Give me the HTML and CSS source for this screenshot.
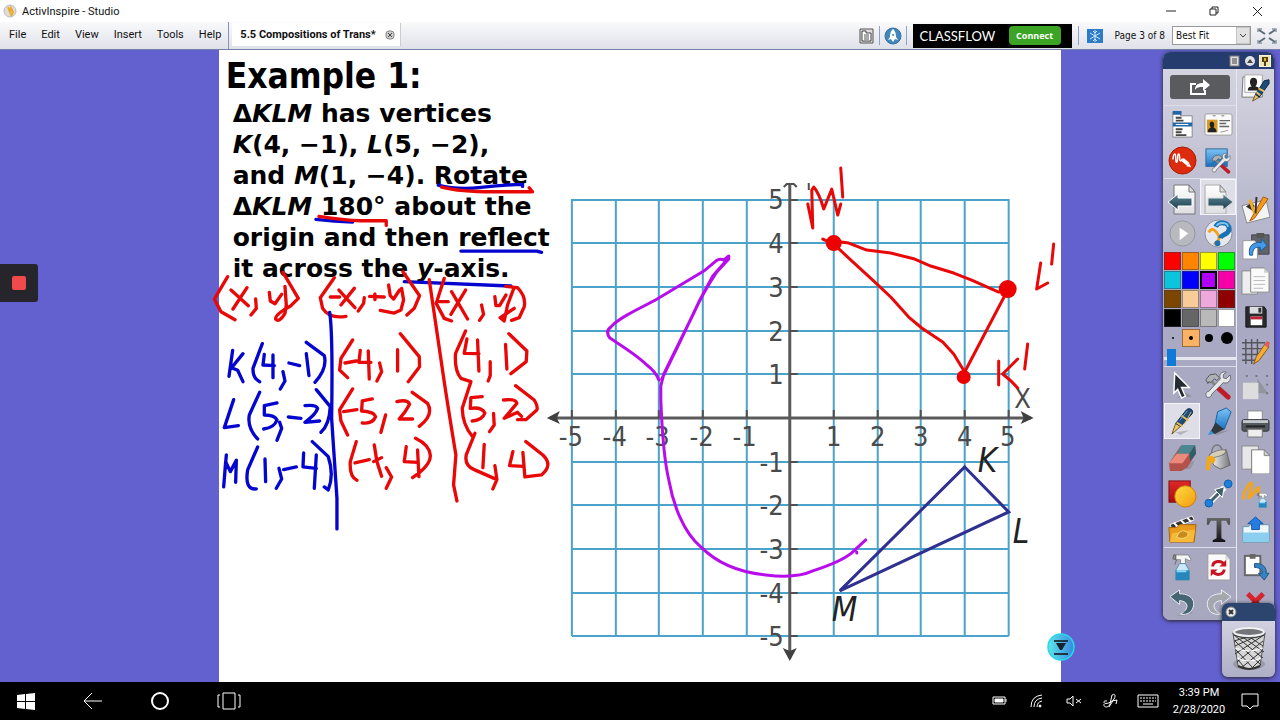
FILE: index.html
```html
<!DOCTYPE html>
<html lang="en">
<head>
<meta charset="utf-8">
<title>ActivInspire - Studio</title>
<link rel="stylesheet" href="styles.css">
</head>
<body>
<svg class="sprite" aria-hidden="true">
  <defs>
    <linearGradient id="gBlue" x1="0" y1="0" x2="0" y2="1"><stop offset="0" stop-color="#7cc4f4"/><stop offset="1" stop-color="#1f74c4"/></linearGradient>
    <linearGradient id="gPaper" x1="0" y1="0" x2="0" y2="1"><stop offset="0" stop-color="#fff"/><stop offset="1" stop-color="#dedee2"/></linearGradient>
    <linearGradient id="gSteel" x1="0" y1="0" x2="1" y2="0"><stop offset="0" stop-color="#fff"/><stop offset="1" stop-color="#74777c"/></linearGradient>
    <linearGradient id="gGold" x1="0" y1="0" x2="1" y2="1"><stop offset="0" stop-color="#ffdc40"/><stop offset="1" stop-color="#f59a10"/></linearGradient>
    <linearGradient id="gRed" x1="0" y1="0" x2="0" y2="1"><stop offset="0" stop-color="#e02828"/><stop offset="1" stop-color="#a80d14"/></linearGradient>
    <linearGradient id="gArrow" x1="0" y1="0" x2="0" y2="1"><stop offset="0" stop-color="#5a8797"/><stop offset="1" stop-color="#1c3a48"/></linearGradient>
    <linearGradient id="gDark" x1="0" y1="0" x2="0" y2="1"><stop offset="0" stop-color="#666"/><stop offset="1" stop-color="#111"/></linearGradient>
  </defs>
  <symbol id="tools" viewBox="0 0 30 30">
    <path d="M6 9L23 26" stroke="#888" stroke-width="3"/>
    <path d="M15 18L25 27" stroke="#c01c28" stroke-width="5" stroke-linecap="round"/>
    <path d="M2 9l4-5 6-1 4 4-3 3-2-2-4 4-2-1-1 2z" fill="#aeb2b6" stroke="#555"/>
    <path d="M27 4l-4 4-3-1 0-3 3-3c-5-1-8 3-6 7L5 21c-3 0-4 4-2 6 2 1 5 0 5-3L20 12c4 2 9-2 7-8z" fill="#e6e8ea" stroke="#66696d"/>
  </symbol>
  <symbol id="pen" viewBox="0 0 30 30">
    <path d="M8 26l14-2-9 5z" fill="#777" opacity=".4"/>
    <path d="M4 28l4-11 5 3z" fill="#e9c572" stroke="#755821"/>
    <path d="M8 17L19 3c3-3 8 0 6 4L13 20z" fill="#1d4c7a" stroke="#0d2540"/>
    <path d="M14 9l7 5M9 16l6 4" stroke="#e6bd58" stroke-width="2"/><path d="M24 5l-7 13" stroke="#e6bd58"/>
    <path d="M12 14l8-10" stroke="#79a9d2"/>
  </symbol>
  <symbol id="annotate" viewBox="0 0 30 30">
    <path d="M2 4h20v21H1z" fill="#f6f6f6" stroke="#777"/><rect x="4" y="2" width="18" height="18" fill="#fff" stroke="#aaa"/>
    <path d="M7 18c0-3 2-4 4-4-3-4-2-9 2-9s5 5 2 9c2 0 4 1 4 4z" fill="#222"/>
    <path d="M12 29l3-7 4 3z" fill="#e9c572" stroke="#755821"/><path d="M15 22l9-14 5-1 0 4-10 14z" fill="#1d4c7a" stroke="#0d2540"/><path d="M18 16l6 3M16 20l4 3" stroke="#e6bd58" stroke-width="2"/>
  </symbol>
  <symbol id="menulist" viewBox="0 0 30 30">
    <path d="M5 2h8v4h12v22H5z" fill="#fff" stroke="#888"/><path d="M5 1h9v4H5zM5 13h20v4H5z" fill="#2467a8"/>
    <path d="M8 8h6M8 11h8M8 20h7M8 23h6M8 26h11" stroke="#444" stroke-width="2"/><path d="M8 15h13" stroke="#fff"/>
  </symbol>
  <symbol id="idcard" viewBox="0 0 30 30">
    <rect x="1" y="4" width="28" height="22" rx="2" fill="#fafafa" stroke="#999"/><path d="M9 6h3M18 6h3" stroke="#777"/>
    <rect x="3" y="10" width="11" height="13" fill="#d79a25"/><path d="M4 23c0-4 2-4 3-5-2-3-1-6 1-6 3 0 3 4 2 6 2 1 3 2 3 5z" fill="#222"/>
    <path d="M16 11h11M16 14h7M16 17h10" stroke="#666" stroke-width="1.5"/><path d="M17 23l8-2" stroke="#999"/>
  </symbol>
  <symbol id="record" viewBox="0 0 30 30">
    <circle cx="15" cy="15" r="14" fill="#dd2c0d" stroke="#a51c06"/><path d="M5 14c1-8 3-7 3-1s2 4 2-1 2-5 2 0 1 4 3 1" fill="none" stroke="#fff" stroke-width="1.5"/><path d="M15 14l6 5" stroke="#fff" stroke-width="4"/><path d="M22 18l2 4-5-1z" fill="#fff"/>
  </symbol>
  <symbol id="desktop" viewBox="0 0 30 30">
    <rect x="2" y="3" width="22" height="18" fill="url(#gBlue)" stroke="#2c6398"/><path d="M3 19c7-2 14-6 20-11v12H3z" fill="#1a67af" opacity=".5"/><use href="#tools" x="7" y="7" width="22" height="22"/>
  </symbol>
  <symbol id="pageprev" viewBox="0 0 36 36">
    <path d="M10 6h15l6 7v22H10z" fill="url(#gPaper)" stroke="#777"/><path d="M25 6v7h6z" fill="#ddd" stroke="#777"/>
    <path d="M4 23l10-8v4h14v8H14v4z" fill="url(#gArrow)" stroke="#fff"/>
  </symbol>
  <symbol id="pagenext" viewBox="0 0 36 36">
    <path d="M5 6h15l6 7v22H5z" fill="url(#gPaper)" stroke="#aaa"/><path d="M20 6v7h6z" fill="#ddd" stroke="#888"/>
    <path d="M33 23l-10-8v4H8v8h15v4z" fill="url(#gArrow)" stroke="#ddd"/>
  </symbol>
  <symbol id="play" viewBox="0 0 30 30"><circle cx="15" cy="15" r="13" fill="#b8b9be" stroke="#94969b"/><path d="M12 9l9 6-9 7z" fill="#fff"/></symbol>
  <symbol id="help" viewBox="0 0 30 30">
    <circle cx="15" cy="15" r="14" fill="#e5e8ee" stroke="#8a8f98"/><path d="M5 14c3-7 8-1 10 3s-2 9-5 8" fill="none" stroke="#f4a11e" stroke-width="3"/><path d="M12 8c3-6 14-5 14 2s-8 5-9 10" fill="none" stroke="#1a72b6" stroke-width="5"/><path d="M13 7c3-4 11-4 12 1" fill="none" stroke="#7ec4ee" stroke-width="2"/><circle cx="14" cy="25" r="3" fill="#1a72b6"/>
  </symbol>
  <symbol id="cursor" viewBox="0 0 30 30"><path d="M10 28l15-2-10-5z" fill="#777" opacity=".5"/><path d="M7 2l15 15h-8l4 9-4 2-4-9-4 4z" fill="#252b33" stroke="#fff" stroke-width="1.5"/></symbol>
  <symbol id="marker" viewBox="0 0 30 30"><path d="M7 27l20-3-14 5z" fill="#777" opacity=".5"/><path d="M14 5l9-4 5 4-7 18-10-3z" fill="url(#gBlue)" stroke="#17619f"/><path d="M12 16l-5 9 4 3 10-5z" fill="#303840"/><path d="M7 24l-3 5 6-1z" fill="#3296de"/></symbol>
  <symbol id="eraser" viewBox="0 0 30 30"><path d="M5 28l18-1 5-9z" fill="#777" opacity=".4"/><path d="M13 3h15l1 8-9 14-6 4H2l-1-8z" fill="#b2524b"/><path d="M14 2h14l-6 9H9z" fill="#4b8792"/><path d="M28 2l1 9-6 8-1-8z" fill="#2d5f69"/><path d="M9 11h13l-7 10H1z" fill="#e98a7d"/></symbol>
  <symbol id="bucket" viewBox="0 0 30 30"><path d="M8 13C7 0 17-1 19 8" fill="none" stroke="#777" stroke-width="1.5"/><path d="M6 12l17-5 4 16-10 4-7-4z" fill="url(#gSteel)" stroke="#6b675c"/><ellipse cx="14" cy="11" rx="9" ry="3" transform="rotate(-17 14 11)" fill="#d5cfb9" stroke="#777"/><path d="M3 15c3-4 8-1 9 2l-2 5-3-3-1 9c-3 1-4 0-4-3z" fill="#f4a914"/></symbol>
  <symbol id="shapes" viewBox="0 0 30 30"><rect x="1" y="2" width="22" height="22" fill="url(#gRed)" stroke="#850f14"/><circle cx="18" cy="18" r="11" fill="url(#gGold)" stroke="#c98005"/></symbol>
  <symbol id="connector" viewBox="0 0 30 30"><path d="M5 25L21 9" stroke="#fff" stroke-width="6"/><path d="M5 25L19 11" stroke="#40616c" stroke-width="3"/><path d="M11 11l10-3-2 11z" fill="#40616c" stroke="#fff"/><circle cx="5" cy="25" r="4" fill="#1c80dc" stroke="#125ca8"/><circle cx="25" cy="5" r="4" fill="#1c80dc" stroke="#125ca8"/></symbol>
  <symbol id="media" viewBox="0 0 30 30"><path d="M2 10L25 1l2 4L4 14z" fill="#333" stroke="#eee"/><path d="M6 8l4 4M13 5l4 4M20 3l4 4" stroke="#fff" stroke-width="2"/><path d="M1 13h8l3-3h17l-2 18H2z" fill="#e79a1c" stroke="#a96208"/><path d="M4 19l24-4-2 13H2z" fill="#f7b937"/><path d="M9 23c3-8 8-8 12-4-1 6-8 6-12 4z" fill="#c98a1c" stroke="#f8e17a"/></symbol>
  <symbol id="text" viewBox="0 0 30 30"><path d="M3 3h24v7h-2l-2-4h-5v18l4 2v2H9v-2l4-2V6H7l-2 4H3z" fill="url(#gDark)"/></symbol>
  <symbol id="spray" viewBox="0 0 30 30"><path d="M8 3h13l3 5-2 1-4-2v5h-5V8H8z" fill="#f4f5f6" stroke="#888"/><path d="M8 3H6l-1 4 3 1zM9 8l-2 5" stroke="#666" fill="#888"/><path d="M12 12h6l4 7v10H8V19z" fill="#cbe7f6" stroke="#5f8da5"/><path d="M8 19h14v10H8z" fill="#2587bd"/><path d="M9 20h10" stroke="#8cddfa" stroke-width="2"/></symbol>
  <symbol id="reset" viewBox="0 0 30 30"><path d="M4 2h18l5 6v21H4z" fill="#fafafa" stroke="#999"/><path d="M22 2v6h5z" fill="#ddd"/><path d="M9 15c0-6 9-7 12-2M21 18c-1 6-9 7-12 2" fill="none" stroke="#c91521" stroke-width="3"/><path d="M23 8v7h-7zM7 25v-7h7z" fill="#c91521"/></symbol>
  <symbol id="undo" viewBox="0 0 30 30"><path d="M8 29c14 0 18-4 17-8v5z" fill="#777" opacity=".5"/><path d="M2 9l10-7v4c15 0 18 11 11 19-3 2-7 3-10 2 9-5 9-13-1-14v4z" fill="#456575" stroke="#e8edf0"/></symbol>
  <symbol id="redo" viewBox="0 0 30 30"><path d="M28 9L18 2v4C3 6 0 17 7 25c3 2 7 3 10 2-9-5-9-13 1-14v4z" fill="#a4a7ae" stroke="#f1f1f4"/></symbol>
  <symbol id="pencils" viewBox="0 0 30 30"><path d="M1 11l25-6 4 18-24 6z" fill="#f4f4f4" stroke="#888"/><path d="M5 12l6-4 3 3-1 6z" fill="#303030"/><path d="M9 27L23 2l5 2-14 20-5 3z" fill="#f39b1b" stroke="#a7570e"/><path d="M9 5l5 14" stroke="#f8a81b" stroke-width="3"/><path d="M16 2l-1 17" stroke="#333" stroke-width="2"/></symbol>
  <symbol id="paste" viewBox="0 0 30 30"><path d="M11 4h18v20H11z" fill="#61636a" stroke="#45474d"/><path d="M16 2h8v5h-8z" fill="#555"/><path d="M2 10h12l3 3v16H2z" fill="#fff" stroke="#999"/><path d="M9 25c-2-10 4-14 12-13V8l6 7-7 6v-4c-6-1-8 2-8 8z" fill="#4598e6" stroke="#195c9e"/></symbol>
  <symbol id="copies" viewBox="0 0 30 30"><path d="M1 4h16v24H1z" fill="#eee" stroke="#888"/><path d="M10 1h14l5 5v20H10z" fill="#fafafa" stroke="#888"/><path d="M13 10h12M13 14h12M13 18h12M13 22h10" stroke="#bbb"/><path d="M24 1v5h5z" fill="#ccc"/></symbol>
  <symbol id="pages" viewBox="0 0 30 30"><path d="M1 1h17v24H1z" fill="#e7e7e9" stroke="#888"/><path d="M11 5h13l6 6v19H11z" fill="#fff" stroke="#777"/><path d="M24 5v6h6z" fill="#ccc" stroke="#888"/></symbol>
  <symbol id="save" viewBox="0 0 30 30"><path d="M5 5h19l2 3v18H5z" fill="#292a2d" stroke="#161719"/><rect x="9" y="5" width="13" height="7" fill="#d9dce0"/><rect x="18" y="6" width="3" height="5" fill="#333"/><rect x="10" y="15" width="12" height="9" fill="#fff"/><rect x="10" y="15" width="12" height="3" fill="#c02236"/></symbol>
  <symbol id="gridpen" viewBox="0 0 30 30"><path d="M1 5h24M1 11h22M1 17h18M1 23h14M5 1v26M11 1v26M17 1v20" stroke="#55575c" stroke-width="1.5"/><path d="M13 27l3-8 9-13 4 3-10 14z" fill="#f5ad35" stroke="#8a5620"/><path d="M24 7l3-4 3 2-2 5z" fill="#db5c5b"/></symbol>
  <symbol id="shapebox" viewBox="0 0 30 30"><path d="M17 5l11 15H17z" fill="#92949e"/><rect x="2" y="9" width="16" height="17" fill="#ddd"/><path d="M5 2h2M15 2h2M26 2h2M26 11h2M26 20h2" stroke="#777" stroke-width="2"/></symbol>
  <symbol id="printer" viewBox="0 0 30 30"><path d="M7 2h15v10H7z" fill="#fff" stroke="#888"/><rect x="1" y="11" width="28" height="12" rx="2" fill="#53595e" stroke="#33383c"/><path d="M2 13h26" stroke="#c2c7cb" stroke-width="3"/><path d="M7 21h15v8H7z" fill="#eee" stroke="#777"/><path d="M5 18h20" stroke="#222" stroke-width="2"/></symbol>
  <symbol id="inkspray" viewBox="0 0 30 30"><path d="M2 19C4 6 12-3 11 5S5 21 10 16 19 2 18 10l0 4" fill="none" stroke="#f3a51d" stroke-width="3"/><use href="#spray" x="14" y="9" width="17" height="21"/></symbol>
  <symbol id="upload" viewBox="0 0 30 30"><path d="M2 11h6l2-2h19v18H2z" fill="#eef7fd" stroke="#6a96b0"/><path d="M2 17h27v10H2z" fill="#8acff0"/><path d="M15 1l8 7h-4v6h-8V8H7z" fill="#267de1" stroke="#1758aa"/></symbol>
  <symbol id="clip" viewBox="0 0 30 30"><rect x="4" y="4" width="16" height="20" fill="#fff" stroke="#666" stroke-width="2"/><path d="M9 2h6v5H9z" fill="#666"/><path d="M14 12c8-1 13 4 12 10h3l-5 7-6-7h4c0-4-3-6-8-6z" fill="#3683c4" stroke="#1e5588"/></symbol>
  <symbol id="cross" viewBox="0 0 30 30"><path d="M7 6l8 8 8-8" fill="none" stroke="#d4242e" stroke-width="5"/><path d="M15 14l-7 8M15 14l7 8" stroke="#a8151c" stroke-width="5"/></symbol>
</svg>

<header class="titlebar">
  <svg class="appicon" viewBox="0 0 14 14" aria-hidden="true"><circle cx="7" cy="7" r="6" fill="#ddd" stroke="#bbb"/><path d="M5 3l2 5 1-4 2 4-2 4" fill="none" stroke="#f0a820" stroke-width="2"/></svg>
  <h1 class="apptitle">ActivInspire - Studio</h1>
  <div class="wincontrols">
    <button aria-label="Minimize"><svg viewBox="0 0 12 12"><path d="M1 6h10"/></svg></button>
    <button aria-label="Restore"><svg viewBox="0 0 12 12"><path d="M2 4h6v6H2zM4 4V2h6v6H8"/></svg></button>
    <button aria-label="Close"><svg viewBox="0 0 12 12"><path d="M2 2l9 9M11 2l-9 9"/></svg></button>
  </div>
</header>

<div class="menubar">
  <nav class="menus">
    <button>File</button><button>Edit</button><button>View</button><button>Insert</button><button>Tools</button><button>Help</button>
  </nav>
  <div class="tab">
    <span>5.5 Compositions of Trans*</span>
    <button class="tabclose" aria-label="Close tab"><svg viewBox="0 0 10 10"><rect x="1" y="1" width="8" height="8" rx="3" fill="#ccc" stroke="#888"/><path d="M3 3l4 4M7 3l-4 4" stroke="#444"/></svg></button>
  </div>
  <div class="barright">
    <button class="ibtn" aria-label="Browsers"><svg viewBox="0 0 18 18"><path d="M3 2h13v14H3z" fill="#ddd" stroke="#555"/><path d="M5 4h4v2h5v8H5z" fill="#fff" stroke="#444"/><path d="M7 8h5M7 10h5M7 12h5" stroke="#555"/></svg></button>
    <span class="sep"></span>
    <button class="ibtn" aria-label="Launch"><svg viewBox="0 0 18 18"><circle cx="9" cy="9" r="8" fill="#4186bd" stroke="#346f9f"/><path d="M9 2c3 3 3 6 3 8l2 3-3-1-2 3-2-3-3 1 2-3c0-2 0-5 3-8z" fill="#fff"/><circle cx="9" cy="8" r="1" fill="#4186bd"/></svg></button>
    <span class="sep"></span>
    <div class="classflow"><span>CLASSFLOW</span><button>Connect</button></div>
    <span class="sep"></span>
    <button class="ibtn flake" aria-label="Freeze"><svg viewBox="0 0 18 18"><rect x="1" y="2" width="16" height="14" fill="#2e7ac4"/><path d="M9 3v12M4 6l10 6M14 6L4 12M7 4l2 2 2-2M7 14l2-2 2 2" stroke="#c8e6fa" fill="none"/></svg></button>
    <label class="pageno" for="zoom">Page 3 of 8</label>
    <div class="selectbox"><select id="zoom"><option>Best Fit</option></select><svg viewBox="0 0 14 17" aria-hidden="true"><path d="M0 0h14v17H0z" fill="#e1e1e1" stroke="#aaa"/><path d="M4 7l3 3 3-3" fill="none" stroke="#444"/></svg></div>
    <button class="ibtn full" aria-label="Full screen"><svg viewBox="0 0 20 18"><path d="M1 5V2h4M15 2h4v3M1 13v3h4M15 16h4v-3" stroke="#8b98a4" stroke-width="1.5" fill="none"/><path d="M2 3l6 4M18 3l-6 4M2 15l6-4M18 15l-6-4" stroke="#5d6b78" stroke-width="2" fill="none"/></svg></button>
  </div>
</div>

<main class="desk">
  <section class="slide">
    <h2>Example 1:</h2>
    <p>Δ<i>KLM</i> has vertices<br><i>K</i>(4, −1), <i>L</i>(5, −2),<br>and <i>M</i>(1, −4). Rotate<br>Δ<i>KLM</i> 180° about the<br>origin and then reflect<br>it across the <i>y</i>-axis.</p>
    <svg class="ink" viewBox="218 50 843 632" role="img" aria-label="Coordinate grid with triangle KLM, its image K'L'M', and handwritten coordinates">
      <path class="grid" d="M571 199V636M615 199V636M658 199V636M702 199V636M746 199V636M833 199V636M877 199V636M920 199V636M964 199V636M1008 199V636M571 200H1008M571 243H1008M571 287H1008M571 331H1008M571 374H1008M571 462H1008M571 505H1008M571 549H1008M571 593H1008M571 636H1008"/>
      <path class="axis" d="M789 185V658M549 418H1030"/>
      <path class="tick" d="M571 410v8M615 410v8M658 410v8M702 410v8M746 410v8M833 410v8M877 410v8M920 410v8M964 410v8M1008 410v8M789 200h8M789 243h8M789 287h8M789 331h8M789 374h8M789 462h8M789 505h8M789 549h8M789 593h8M789 636h8M783 187l3-3h7l3 3M808 183v7"/>
      <path class="head" d="M546 418l13-7-3 7 3 6zM1033 418l-13-7 3 7-3 6zM789 661l-7-13 7 3 7-3z"/>
      <g class="nums end">
        <text x="582" y="446">-5</text><text x="626" y="446">-4</text><text x="669" y="446">-3</text><text x="713" y="446">-2</text><text x="756" y="446">-1</text>
        <text x="783" y="209">5</text><text x="783" y="253">4</text><text x="783" y="297">3</text><text x="783" y="341">2</text><text x="783" y="384">1</text>
        <text x="783" y="472">-1</text><text x="783" y="515">-2</text><text x="783" y="559">-3</text><text x="783" y="603">-4</text><text x="783" y="646">-5</text>
      </g>
      <g class="nums mid">
        <text x="833" y="446">1</text><text x="877" y="446">2</text><text x="920" y="446">3</text><text x="964" y="446">4</text><text x="1007" y="446">5</text><text x="1022" y="408">X</text>
      </g>
      <path class="tri" d="M964 467L1008 512L839 591Z"/>
      <g class="verts"><text x="977" y="472">K</text><text x="1012" y="543">L</text><text x="831" y="621">M</text></g>

      <path class="stroke purple" d="M658 380C655 372 650 368 646 365C636 355 618 344 609 338C606 334 606 330 610 327C620 316 639 309 658 298L703 271L715 261Q719 258 723 260L728 256L728 259L716 272C706 287 698 302 692 315L663 374L660 386V400C661 424 662 455 668 480C672 503 682 532 700 547C719 566 743 573 765 575C780 577 799 577 812 571Q840 562 851 553L865 540M726 260L712 276L698 302L680 340L661 379M856 552v1"/>
      <path class="stroke red" d="M807 204L812 228L811 190L813 187Q818 192 823 209L831 189L837 215L840 204M840 168L842 197M822 239L833 244L848 258L872 280L890 297L908 317L921 328L942 342L953 354L964 372L986 330L1006 292M833 241L848 243L866 250L890 253L914 259L930 266L953 273L971 280L998 292L1008 290M1040 263L1036 289L1047 283M1053 244L1051 264M998 361L998 385M1017 359L1002 374Q1010 380 1017 388M1027 344L1024 369"/>
      <g fill="#ed0000"><circle cx="833" cy="243" r="8"/><circle cx="1007" cy="289" r="9"/><circle cx="963" cy="377" r="7"/></g>

      <g transform="translate(210 50) scale(.33333)">
        <path class="wide blue" d="M682 405Q740 420 810 412T935 403v6M315 508Q370 514 425 516M750 603H978l14 4M580 695L900 708"/>
        <path class="wide red" d="M692 411Q750 426 860 425H965l-10-12M324 499Q400 511 450 512L526 512v14"/>
      </g>
      <g transform="translate(210 275) scale(.33333)">
        <path class="wide red" d="M50 5L10 72 30 110 72 134M60 45L112 92M108 38L66 102M134 72L136 100 120 120M175 52L178 78 192 86 212 58M222 34L226 90 222 115Q205 144 194 132 192 118 240 92L262 70 216-8M370 8L328 68 335 100Q355 132 405 124M358 66H386M384 45L432 98M430 40L390 90M460 68L458 85 442 108M476 64L520 66M492 57V74M533 30L538 62 548 72 566 45M572 40L578 75 570 105 550 114 508 106M576-10L626 62 610 100 588 120M655 14Q675 150 700 320 712 400 735 540L728 630 738 678M700 10L676 85 700 130 722 138M686 80H712M722 50L770 132M764 45L720 118M812 90L818 118 806 136M852 65L855 92 866 92 885 60M908 42L890 90 880 138 868 128 910 100M885 34L920 38Q946 65 940 95L925 128 902 136"/>
        <path class="wide red" d="M425 195L390 250 386 285 410 308M402 264L436 258M448 226L444 262H480M472 228L475 312M506 264L512 290 498 318M560 224V288M568 176L625 245 626 275 592 320M764 168L734 235Q730 285 750 310L780 320 754 400Q755 450 785 485M768 192L760 235 804 236M800 195L804 288M838 260V302l-6 16M884 208L888 282M894 176L948 228 946 260 900 296M425 342L386 405 390 438 410 480M398 410L438 404M484 372L454 378 452 408Q490 410 494 425 485 448 454 444M524 420L510 472M558 380Q590 372 596 388 585 410 565 432H605M604 352L650 385Q670 420 625 454M814 365L780 368 778 400Q812 395 822 414 815 435 784 438M848 415L850 450 836 470M878 375Q915 370 918 385L880 430 920 412 932 424M914 332L970 375Q982 395 978 405L945 434H920M436 500L418 560Q415 605 438 616M432 564L475 554M490 510L498 560 512 604M488 560L512 548M526 578L542 606 526 640M586 515L580 560 620 562M620 525L624 605M614 490Q655 510 658 540T605 608M792 475L766 540Q760 572 790 584L858 614M820 508L816 578M852 572L858 614 846 642M906 530L896 572 938 574M936 532L942 606M945 500L996 540Q1028 570 992 600L942 606"/>
        <path class="wide blue" d="M356 112Q366 170 362 430L378 670V762M65 226L54 304M96 236L62 278 80 286 96 320M154 206L126 280Q125 310 146 320M160 238L156 270 190 272M186 240V308M216 290L222 318 208 342M234 264L266 272M286 236L294 302M286 202L340 242Q350 280 312 322M68 374L40 458 82 452M146 352L115 420Q108 458 140 492M198 384L160 392V420Q192 420 198 435 190 458 158 462M206 442L212 460 198 496M232 426L270 430M282 392Q315 388 320 400 315 418 282 442L326 438M316 344L358 395Q355 450 330 472M46 540L38 636 44 560 58 590 76 556 74 622M140 516L110 585Q100 645 136 642M162 552L164 620M204 580L212 612 196 640M218 584L256 576M278 534L276 576 316 580M316 540L310 640M304 500L352 545Q370 600 352 645L340 636"/>
      </g>
    </svg>
    <button class="pagedown" aria-label="Extend page"><svg viewBox="0 0 28 28"><defs><linearGradient id="gPd" x1="0" x2="1" y1="0" y2="0"><stop offset="0" stop-color="#5ce6ea"/><stop offset="1" stop-color="#3888e0"/></linearGradient></defs><circle cx="14" cy="14" r="13" fill="url(#gPd)" stroke="#25d9ea" stroke-width="1.5"/><path d="M7 8h14M7 21h14" stroke="#111" stroke-width="1.5"/><path d="M9 10h10l-4 7h-2z" fill="#18222c"/></svg></button>
  </section>

  <button class="recorder" aria-label="Stop recording"><span></span></button>

  <aside class="toolbox">
    <div class="tbhead">
      <button aria-label="Menu"><svg viewBox="0 0 12 12"><rect x="1" y="1" width="9" height="10" fill="#ddd" stroke="#777"/><path d="M3 4h5M3 6h5M3 8h5" stroke="#444"/></svg></button>
      <button aria-label="Roll up"><svg viewBox="0 0 12 12"><circle cx="6" cy="6" r="5" fill="#e2e2e6"/><path d="M3 8l3-4 3 4z" fill="#444"/></svg></button>
      <button aria-label="Pin"><svg viewBox="0 0 12 12"><rect width="12" height="12" fill="#f1e6b0" stroke="#fff"/><path d="M3 2h6v5H7v4H5V7H3z" fill="#4b3e14"/><path d="M5 3h2v3H5z" fill="#e0b42e"/></svg></button>
    </div>
    <div class="tbbody">
      <div class="maincol">
        <div class="group sharegroup"><button class="share" aria-label="Share"><svg viewBox="0 0 22 18"><path d="M7 6H2v10h14v-4" fill="none" stroke="#fff" stroke-width="2"/><path d="M6 12c0-6 4-7 8-7V1l7 6-7 6V9c-4 0-6 0-8 3z" fill="#fff"/></svg></button></div>
        <div class="group icons"><button aria-label="Menu"><svg><use href="#menulist"/></svg></button><button aria-label="Profiles"><svg><use href="#idcard"/></svg></button><button aria-label="Recorder"><svg><use href="#record"/></svg></button><button aria-label="Desktop tools"><svg><use href="#desktop"/></svg></button></div>
        <div class="group icons nav"><button class="big" aria-label="Previous page"><svg><use href="#pageprev"/></svg></button><button class="big lit" aria-label="Next page"><svg><use href="#pagenext"/></svg></button><button aria-label="Play"><svg><use href="#play"/></svg></button><button aria-label="Help"><svg><use href="#help"/></svg></button></div>
        <div class="colours">
          <button class="c-red" aria-label="Red"></button><button class="c-orange" aria-label="Orange"></button><button class="c-yellow" aria-label="Yellow"></button><button class="c-green" aria-label="Green"></button>
          <button class="c-cyan" aria-label="Cyan"></button><button class="c-blue" aria-label="Blue"></button><button class="c-purple picked" aria-label="Purple"></button><button class="c-pink" aria-label="Pink"></button>
          <button class="c-brown" aria-label="Brown"></button><button class="c-peach" aria-label="Peach"></button><button class="c-lilac" aria-label="Lilac"></button><button class="c-maroon" aria-label="Maroon"></button>
          <button class="c-black" aria-label="Black"></button><button class="c-grey" aria-label="Grey"></button><button class="c-silver" aria-label="Silver"></button><button class="c-white" aria-label="White"></button>
        </div>
        <div class="sizes"><button aria-label="Size 1"><svg viewBox="0 0 16 16"><circle cx="8" cy="8" r="1"/></svg></button><button class="on" aria-label="Size 2"><svg viewBox="0 0 16 16"><circle cx="8" cy="8" r="2"/></svg></button><button aria-label="Size 3"><svg viewBox="0 0 16 16"><circle cx="8" cy="8" r="4"/></svg></button><button aria-label="Size 4"><svg viewBox="0 0 16 16"><circle cx="8" cy="8" r="6"/></svg></button></div>
        <input class="width" type="range" min="0" max="100" value="5" aria-label="Pen width">
        <div class="group icons draw"><button aria-label="Select"><svg><use href="#cursor"/></svg></button><button aria-label="Tools"><svg><use href="#tools"/></svg></button><button class="lit" aria-label="Pen"><svg><use href="#pen"/></svg></button><button aria-label="Highlighter"><svg><use href="#marker"/></svg></button><button aria-label="Eraser"><svg><use href="#eraser"/></svg></button><button aria-label="Fill"><svg><use href="#bucket"/></svg></button><button aria-label="Shapes"><svg><use href="#shapes"/></svg></button><button aria-label="Connector"><svg><use href="#connector"/></svg></button><button aria-label="Insert media"><svg><use href="#media"/></svg></button><button aria-label="Text"><svg><use href="#text"/></svg></button></div>
        <div class="group icons"><button aria-label="Clear"><svg><use href="#spray"/></svg></button><button aria-label="Reset page"><svg><use href="#reset"/></svg></button><button aria-label="Undo"><svg><use href="#undo"/></svg></button><button aria-label="Redo"><svg><use href="#redo"/></svg></button></div>
      </div>
      <div class="sidecol">
        <button aria-label="Annotate desktop"><svg><use href="#annotate"/></svg></button>
        <div class="sidelist">
          <button aria-label="Design mode"><svg><use href="#pencils"/></svg></button><button aria-label="Paste"><svg><use href="#paste"/></svg></button><button aria-label="Duplicate page"><svg><use href="#copies"/></svg></button><button aria-label="Save"><svg><use href="#save"/></svg></button><button aria-label="Grid"><svg><use href="#gridpen"/></svg></button><button aria-label="Group"><svg><use href="#shapebox"/></svg></button><button aria-label="Print"><svg><use href="#printer"/></svg></button><button aria-label="Copy"><svg><use href="#pages"/></svg></button><button aria-label="Clear annotations"><svg><use href="#inkspray"/></svg></button><button aria-label="Export"><svg><use href="#upload"/></svg></button><button aria-label="Clipboard"><svg><use href="#clip"/></svg></button><button aria-label="Delete"><svg><use href="#cross"/></svg></button>
        </div>
      </div>
    </div>
  </aside>

  <aside class="trash">
    <div class="trashhead"><button aria-label="Close trash"><svg viewBox="0 0 12 12"><circle cx="6" cy="6" r="5" fill="#eee" stroke="#888"/><path d="M4 4l4 4M8 4l-4 4" stroke="#333" stroke-width="2"/></svg></button></div>
    <svg class="bin" viewBox="0 0 36 46" role="img" aria-label="Trash bin">
      <ellipse cx="18" cy="38" rx="16" ry="6" fill="#9a9ba5"/>
      <path d="M2 7L7 40Q18 47 29 40L34 7z" fill="#d6d6d6" stroke="#555"/>
      <path d="M4 15l26 24M3 9l29 23M10 10l23 16M20 12l12 8M5 24l18 19M7 34l7 8M32 15L6 36M33 9L4 28M26 10L4 20M16 11L3 15M31 25L10 42M29 34l-8 8" stroke="#333" fill="none"/>
      <path d="M4 22q14 6 28 0M6 32q12 6 24 0" stroke="#fff" fill="none"/>
      <ellipse cx="18" cy="7" rx="16" ry="5" fill="#74757a" stroke="#333"/><ellipse cx="18" cy="6" rx="15" ry="4" fill="none" stroke="#f2f2f2" stroke-width="2"/>
      <path d="M7 40Q18 46 29 40" fill="none" stroke="#333" stroke-width="2"/>
    </svg>
  </aside>
</main>

<footer class="taskbar">
  <div class="tasks">
    <button aria-label="Start"><svg viewBox="0 0 20 20"><path class="solid" d="M1 4l8-1v7H1zM10 3l9-1v8h-9zM1 11h8v7l-8-1zM10 11h9v8l-9-1z"/></svg></button>
    <button aria-label="Back"><svg viewBox="0 0 20 20"><path d="M19 10H1M9 2l-8 8 8 8"/></svg></button>
    <button aria-label="Search"><svg viewBox="0 0 20 20"><circle cx="10" cy="10" r="8" stroke-width="2"/></svg></button>
    <button class="taskview" aria-label="Task view"><svg viewBox="0 0 24 20"><path d="M6 2h12v16H6zM3 4H1v12h2M21 4h2v12h-2"/></svg></button>
  </div>
  <div class="tray">
    <svg viewBox="0 0 24 20"><path d="M5 6h12v7H5zM18 8v3"/><path d="M7 8h8v3H7z" fill="#fff"/></svg>
    <svg viewBox="0 0 24 20"><path d="M6 16Q6 5 17 4M9 16q0-8 8-9M12 16q0-5 5-6"/><circle cx="15" cy="15" r="1" fill="#fff"/></svg>
    <svg viewBox="0 0 24 20"><path d="M5 8h3l3-3v10l-3-3H5zM14 8l5 4M19 8l-5 4"/></svg>
    <svg viewBox="0 0 24 20"><path d="M5 13c-1 4 5 4 6 0l2-9c3-2 4 1 2 4l-5 8M8 10c-6-1-3 6 5 0l5-1-1 4"/></svg>
    <svg viewBox="0 0 24 20"><path d="M2 4h20v12H2z"/><path d="M4 7h16M4 10h16" stroke-dasharray="2 1"/><path d="M7 13h10"/></svg>
    <time class="clock" datetime="2020-02-28T15:39"><span>3:39 PM</span><span>2/28/2020</span></time>
    <svg viewBox="0 0 24 20"><path d="M4 3h16v12h-5l-3 3-3-3H4z"/></svg>
  </div>
</footer>
</body>
</html>
```
FILE: styles.css
```css
* { box-sizing: border-box; }
body { margin: 0; height: 100vh; display: flex; flex-direction: column; overflow: hidden; font-family: Roboto, "Liberation Sans", sans-serif; font-size: 11px; color: #111; background: #fff; }
button { margin: 0; padding: 0; border: 0; background: none; font: inherit; color: inherit; display: flex; align-items: center; justify-content: center; }
svg { display: block; }
.sprite { position: absolute; width: 0; height: 0; }

.titlebar { display: flex; align-items: center; height: 22px; padding-left: 3px; gap: 5px; flex: none; }
.appicon { width: 14px; height: 14px; }
.apptitle { margin: 0; font-size: 11px; font-weight: 400; }
.wincontrols { margin-left: auto; display: flex; padding-right: 2px; }
.wincontrols button { width: 43px; height: 20px; }
.wincontrols svg { width: 12px; height: 12px; fill: none; stroke: #222; }

.menubar { display: flex; align-items: stretch; height: 28px; flex: none; background: linear-gradient(#fafafc, #dfe1e9); border-bottom: 1px solid #7380a8; }
.menus { display: flex; align-items: flex-start; gap: 15px; padding: 6px 7px 0 9px; border-right: 1px solid #8a95b4; }
.tab { display: flex; align-items: center; gap: 9px; margin: 1px 0 3px 3px; padding: 0 5px 0 8px; background: #fff; border-right: 1px solid #ccc; font-weight: 700; }
.tabclose svg { width: 10px; height: 10px; }
.barright { margin-left: auto; display: flex; align-items: center; padding-right: 3px; }
.ibtn svg { width: 18px; height: 18px; }
.sep { width: 1px; height: 19px; margin: 0 4px; background: #8ea3c4; }
.classflow { display: flex; align-items: center; justify-content: space-between; width: 159px; height: 24px; margin: 0 2px; padding: 0 11px 0 7px; background: #000; color: #fff; font-family: Lato, sans-serif; font-size: 13px; }
.classflow button { width: 52px; height: 19px; border-radius: 4px; background: #3ba424; font: 700 9px "Open Sans", sans-serif; color: #fff; }
.flake { margin: 0 11px 0 3px; }
.pageno { font-family: "DejaVu Sans Condensed", sans-serif; font-size: 10px; margin-right: 7px; }
.selectbox { position: relative; width: 79px; height: 19px; }
.selectbox select { appearance: none; width: 100%; height: 100%; border: 1px solid #999; border-radius: 0; background: #fff; padding: 0 3px; font-family: "DejaVu Sans Condensed", sans-serif; font-size: 10px; color: #111; }
.selectbox svg { position: absolute; right: 1px; top: 1px; width: 14px; height: 17px; pointer-events: none; }
.full { margin-left: 6px; }
.full svg { width: 20px; }

.desk { position: relative; flex: 1; min-height: 0; display: flex; justify-content: center; background: #6360d0; }
.slide { position: relative; height: 100%; aspect-ratio: 4 / 3; padding: 5px 7px; background: #fff; color: #000; }
.slide h2 { margin: 0; font: 700 35px/43px "DejaVu Sans Condensed", "DejaVu Sans", sans-serif; }
.slide p { margin: 0 0 0 7px; font: 700 25px/31px "DejaVu Sans", sans-serif; white-space: nowrap; }
.ink { position: absolute; inset: 0; width: 100%; height: 100%; overflow: visible; }
.grid { stroke: #4ba2ca; stroke-width: 2; fill: none; }
.axis { stroke: #5a5a5a; stroke-width: 3; fill: none; }
.tick { stroke: #505050; stroke-width: 2; fill: none; }
.head { fill: #404040; }
.nums { font: 27px "DejaVu Sans Condensed", sans-serif; fill: #4a4a4a; }
.end { text-anchor: end; }
.mid { text-anchor: middle; }
.tri { fill: none; stroke: #303090; stroke-width: 3; }
.verts { font: italic 33px "DejaVu Sans Condensed", sans-serif; fill: #222; }
.stroke, .wide { fill: none; stroke-linecap: round; stroke-linejoin: round; }
.stroke { stroke-width: 3; }
.wide { stroke-width: 10; }
.red { stroke: #e80808; }
.blue { stroke: #0505d0; }
.purple { stroke: #b80cec; }
.pagedown { position: absolute; right: -14px; bottom: 21px; }
.pagedown svg { width: 28px; height: 28px; }
.recorder { position: absolute; left: 0; top: 214px; width: 38px; height: 38px; background: #25252b; border-radius: 0 3px 3px 0; }
.recorder span { width: 14px; height: 14px; border-radius: 2px; background: #f2494b; }

.toolbox { position: absolute; top: 2px; right: 6px; width: 111px; border-radius: 7px; background: #b1b1c9; box-shadow: 0 1px 4px #222; overflow: hidden; }
.tbhead { display: flex; align-items: center; justify-content: flex-end; gap: 3px; height: 17px; padding-right: 3px; background: #253d6e; }
.tbhead svg { width: 12px; height: 12px; }
.tbbody { display: flex; background: linear-gradient(#d4d4e0, #aaaac4 40%, #a7a7c0); }
.maincol { flex: 1; padding-left: 1px; border-right: 1px solid #e8e8f2; }
.group { border-bottom: 1px solid #dedee9; }
.group:last-child { border: 0; }
.sharegroup { padding: 6px; }
.share { width: 100%; height: 24px; border-radius: 3px; background: #5a5b5e; }
.share svg { width: 22px; height: 18px; }
.icons { display: grid; grid-template-columns: 1fr 1fr; grid-auto-rows: 36px; }
.icons svg, .sidecol svg { width: 29px; height: 29px; }
.icons .big svg { width: 36px; height: 36px; }
.nav { border: 0; }
.lit { background: #dedee8; outline: 1px solid #f4f4fa; outline-offset: -1px; }
.colours { display: grid; grid-template-columns: repeat(4, 1fr); grid-auto-rows: 18px; gap: 1px; padding: 1px 1px 0 0; }
.colours button { border: 1px solid rgba(60, 60, 60, .5); }
.colours .picked { border: 2px solid #000; }
.c-red { background: #f00; } .c-orange { background: #ff8400; } .c-yellow { background: #ff0; } .c-green { background: #0f0; }
.c-cyan { background: #0cc4dc; } .c-blue { background: #00f; } .c-purple { background: #b000f8; } .c-pink { background: #f800a8; }
.c-brown { background: #7b4700; } .c-peach { background: #f8cc98; } .c-lilac { background: #eea8dc; } .c-maroon { background: #900000; }
.c-black { background: #000; } .c-grey { background: #666; } .c-silver { background: #b9b9b9; } .c-white { background: #fff; }
.sizes { display: flex; justify-content: space-around; align-items: center; height: 22px; }
.sizes svg { width: 16px; height: 16px; }
.sizes .on { background: #fab267; outline: 1px solid #9d6c38; }
.width { appearance: none; display: block; width: 100%; height: 18px; margin: 0; background: linear-gradient(transparent 8px, #e8e8f0 8px, #e8e8f0 11px, transparent 11px); border-bottom: 1px solid #dedee9; }
.width::-webkit-slider-thumb { appearance: none; width: 9px; height: 17px; background: #0f7ad8; }
.sidecol { width: 37px; display: flex; flex-direction: column; }
.sidecol > button { height: 37px; }
.sidelist { flex: 1; margin-top: 86px; display: grid; grid-auto-rows: 1fr; justify-items: stretch; }

.trash { position: absolute; right: 5px; top: 553px; width: 53px; border-radius: 6px; overflow: hidden; background: linear-gradient(#dcdce8, #aeaec6); box-shadow: 0 1px 4px #222; }
.trashhead { display: flex; align-items: center; height: 18px; padding-left: 3px; background: #2b456e; }
.trashhead svg { width: 12px; height: 12px; }
.bin { width: 36px; height: 46px; margin: 5px auto 5px; }

.taskbar { flex: none; height: 38px; display: flex; align-items: center; justify-content: space-between; background: #000; color: #fff; }
.taskbar svg { fill: none; stroke: #fff; }
.taskbar .solid { fill: #fff; stroke: none; }
.tasks { display: flex; gap: 47px; padding-left: 16px; }
.tasks svg { width: 20px; height: 20px; }
.tasks .taskview svg { width: 24px; }
.tray { display: flex; align-items: center; gap: 13px; padding-right: 18px; }
.tray svg { width: 24px; height: 20px; }
.clock { display: flex; flex-direction: column; align-items: center; width: 52px; line-height: 17px; }
```
